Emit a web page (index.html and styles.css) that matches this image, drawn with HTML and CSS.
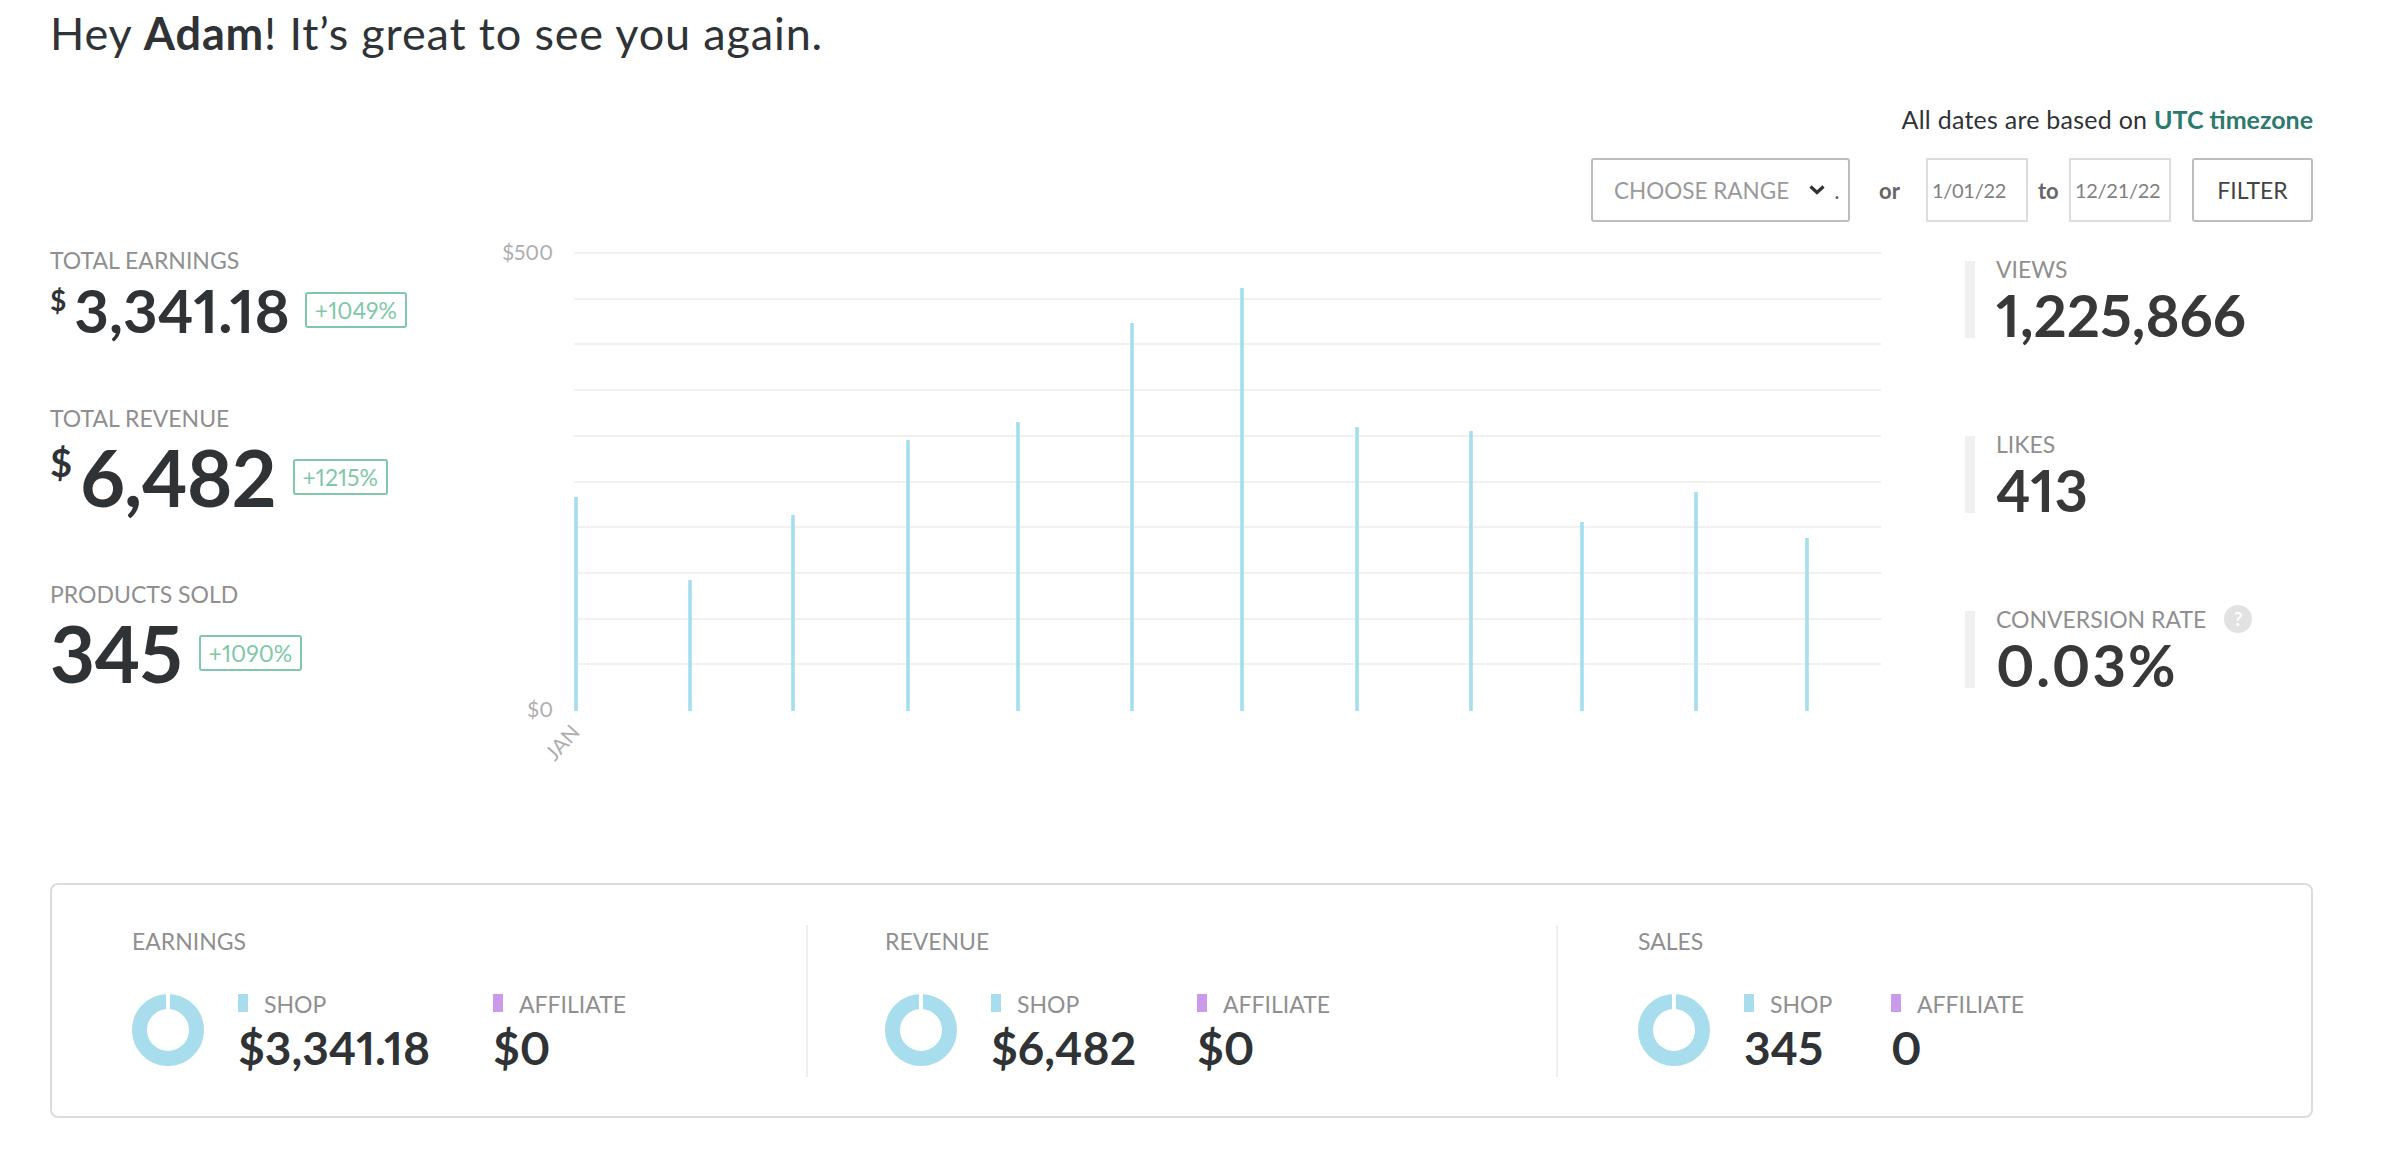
FILE: index.html
```html
<!DOCTYPE html>
<html lang="en">
<head>
<meta charset="UTF-8">
<meta name="viewport" content="width=device-width, initial-scale=1.0">
<title>Dashboard</title>
<link rel="stylesheet" href="styles.css">
</head>
<body>
<h1 class="greeting">Hey <strong>Adam</strong>! It’s great to see you again.</h1>

<p class="tz-note">All dates are based on <a href="#">UTC timezone</a></p>

<div class="filters">
  <div class="range-select">
    <span>CHOOSE RANGE</span>
    <svg class="chevron" width="16" height="10" viewBox="0 0 16 10"><path d="M1.5 1.5l6.5 6 6.5-6" fill="none" stroke="#2f3235" stroke-width="3.2"/></svg>
    <span class="range-dot">.</span>
  </div>
  <span class="filter-word filter-or">or</span>
  <input class="date-input" type="text" value="1/01/22">
  <span class="filter-word filter-to">to</span>
  <input class="date-input" type="text" value="12/21/22">
  <button class="filter-btn">FILTER</button>
</div>

<div class="overview">
  <div class="totals">
    <div class="total">
      <div class="total-label">TOTAL EARNINGS</div>
      <div class="total-row total-row-sm">
        <span class="currency">$</span><span class="total-value">3,341.18</span><span class="change">+1049%</span>
      </div>
    </div>
    <div class="total">
      <div class="total-label">TOTAL REVENUE</div>
      <div class="total-row">
        <span class="currency">$</span><span class="total-value">6,482</span><span class="change">+1215%</span>
      </div>
    </div>
    <div class="total">
      <div class="total-label">PRODUCTS SOLD</div>
      <div class="total-row">
        <span class="total-value">345</span><span class="change">+1090%</span>
      </div>
    </div>
  </div>

  <svg class="chart" width="1391" height="540" viewBox="490 240 1391 540">
    <g class="grid">
      <line x1="574" x2="1881" y1="253" y2="253"/>
      <line x1="574" x2="1881" y1="299" y2="299"/>
      <line x1="574" x2="1881" y1="344" y2="344"/>
      <line x1="574" x2="1881" y1="390" y2="390"/>
      <line x1="574" x2="1881" y1="436" y2="436"/>
      <line x1="574" x2="1881" y1="482" y2="482"/>
      <line x1="574" x2="1881" y1="527" y2="527"/>
      <line x1="574" x2="1881" y1="573" y2="573"/>
      <line x1="574" x2="1881" y1="619" y2="619"/>
      <line x1="574" x2="1881" y1="664" y2="664"/>
    </g>
    <g class="bars">
      <rect x="574.2" y="497" width="3.6" height="214"/>
      <rect x="688.2" y="580" width="3.6" height="131"/>
      <rect x="791.2" y="515" width="3.6" height="196"/>
      <rect x="906.2" y="440" width="3.6" height="271"/>
      <rect x="1016.2" y="422" width="3.6" height="289"/>
      <rect x="1130.2" y="323" width="3.6" height="388"/>
      <rect x="1240.2" y="288" width="3.6" height="423"/>
      <rect x="1355.2" y="427" width="3.6" height="284"/>
      <rect x="1469.2" y="431" width="3.6" height="280"/>
      <rect x="1580.2" y="522" width="3.6" height="189"/>
      <rect x="1694.2" y="492" width="3.6" height="219"/>
      <rect x="1805.2" y="538" width="3.6" height="173"/>
    </g>
    <text class="axis" x="553" y="260" text-anchor="end">$500</text>
    <text class="axis" x="553" y="717" text-anchor="end">$0</text>
    <text class="axis" x="0" y="0" text-anchor="end" transform="translate(581 733) rotate(-48)">JAN</text>
  </svg>

  <div class="engagement">
    <div class="metric">
      <div class="metric-label">VIEWS</div>
      <div class="metric-value">1,225,866</div>
    </div>
    <div class="metric">
      <div class="metric-label">LIKES</div>
      <div class="metric-value">413</div>
    </div>
    <div class="metric">
      <div class="metric-label">CONVERSION RATE <span class="help">?</span></div>
      <div class="metric-value metric-value-rate">0.03%</div>
    </div>
  </div>
</div>

<div class="breakdown">
  <section class="split split-earnings">
    <div class="split-title">EARNINGS</div>
    <div class="split-row">
      <svg class="donut" width="72" height="72" viewBox="0 0 72 72"><circle cx="36" cy="36" r="28.5"/><line x1="36" x2="36" y1="0" y2="16"/></svg>
      <div class="legend legend-wide">
        <div class="legend-head"><i class="swatch swatch-shop"></i>SHOP</div>
        <div class="legend-value">$3,341.18</div>
      </div>
      <div class="legend">
        <div class="legend-head"><i class="swatch swatch-affiliate"></i>AFFILIATE</div>
        <div class="legend-value">$0</div>
      </div>
    </div>
  </section>
  <section class="split split-revenue">
    <div class="split-title">REVENUE</div>
    <div class="split-row">
      <svg class="donut" width="72" height="72" viewBox="0 0 72 72"><circle cx="36" cy="36" r="28.5"/><line x1="36" x2="36" y1="0" y2="16"/></svg>
      <div class="legend legend-mid">
        <div class="legend-head"><i class="swatch swatch-shop"></i>SHOP</div>
        <div class="legend-value">$6,482</div>
      </div>
      <div class="legend">
        <div class="legend-head"><i class="swatch swatch-affiliate"></i>AFFILIATE</div>
        <div class="legend-value">$0</div>
      </div>
    </div>
  </section>
  <section class="split split-sales">
    <div class="split-title">SALES</div>
    <div class="split-row">
      <svg class="donut" width="72" height="72" viewBox="0 0 72 72"><circle cx="36" cy="36" r="28.5"/><line x1="36" x2="36" y1="0" y2="16"/></svg>
      <div class="legend legend-narrow">
        <div class="legend-head"><i class="swatch swatch-shop"></i>SHOP</div>
        <div class="legend-value">345</div>
      </div>
      <div class="legend">
        <div class="legend-head"><i class="swatch swatch-affiliate"></i>AFFILIATE</div>
        <div class="legend-value">0</div>
      </div>
    </div>
  </section>
</div>
</body>
</html>
```

FILE: styles.css
```css
body {
  margin: 0;
  padding: 10px 71px 0 50px;
  background-color: #ffffff;
  color: #303336;
  font-family: Lato, "Open Sans", sans-serif;
  font-variant-numeric: proportional-nums;
}

.greeting {
  margin: 0;
  font-size: 45px;
  line-height: 46px;
  font-weight: 400;
  letter-spacing: 0.85px;
}

.greeting strong {
  font-weight: 700;
}

.tz-note {
  margin: 48px 0 0;
  font-size: 25px;
  line-height: 30px;
  letter-spacing: 0.25px;
  text-align: right;
}

.tz-note a {
  color: #2b7a6c;
  font-weight: 700;
  letter-spacing: 0;
  text-decoration: none;
}

/* filter bar */
.filters {
  display: flex;
  justify-content: flex-end;
  align-items: center;
  margin-top: 24px;
  height: 64px;
}

.range-select {
  display: flex;
  align-items: center;
  box-sizing: border-box;
  width: 259px;
  height: 64px;
  padding-left: 21px;
  border: 2px solid #bdbdbd;
  border-radius: 3px;
  color: #9a9a9a;
  font-size: 22.5px;
}

.chevron {
  margin-left: 20px;
}

.range-dot {
  margin-left: 9px;
  color: #666666;
}

.filter-word {
  color: #666666;
  font-size: 22px;
  font-weight: 700;
}

.filter-or {
  width: 20px;
  margin: 0 27px 0 29px;
}

.filter-to {
  width: 20px;
  margin: 0 11px 0 10px;
}

.date-input {
  box-sizing: border-box;
  width: 102px;
  height: 64px;
  padding: 0 4px;
  border: 2px solid #dddddd;
  border-radius: 0;
  color: #808080;
  font-family: inherit;
  font-size: 20px;
  letter-spacing: -0.3px;
}

.filter-btn {
  box-sizing: border-box;
  width: 121px;
  height: 64px;
  margin-left: 21px;
  border: 2px solid #bdbdbd;
  border-radius: 3px;
  background-color: #ffffff;
  color: #444444;
  font-family: inherit;
  font-size: 23px;
}

/* top area with totals, chart, engagement */
.overview {
  display: flex;
  margin-top: 18px;
  margin-bottom: 103px;
}

.totals {
  width: 440px;
  padding-top: 8px;
}

.total {
  margin-bottom: 65px;
}

.total:first-child {
  margin-bottom: 66px;
}

.total:last-child {
  margin-bottom: 0;
}

.total-label {
  color: #8f8f8f;
  font-size: 23px;
  line-height: 24px;
}

.total-row {
  display: flex;
  align-items: flex-start;
  margin-top: 7px;
  height: 80px;
}

.total-row .total-value {
  font-size: 78px;
  line-height: 80px;
  font-weight: 700;
  letter-spacing: -1px;
}

.total-row .currency {
  font-size: 38px;
  line-height: 50px;
  font-weight: 700;
  margin-right: 8px;
}

.total-row .change {
  margin: 22px 0 0 17px;
}

.total-row-sm {
  margin-top: 8px;
  height: 60px;
}

.total-row-sm .total-value {
  font-size: 60px;
  line-height: 60px;
  letter-spacing: 0;
}

.total-row-sm .currency {
  font-size: 28px;
  line-height: 40px;
}

.total-row-sm .change {
  margin: 12px 0 0 15px;
}

.change {
  padding: 0 8px;
  height: 32px;
  line-height: 32px;
  border: 2px solid #7fc8a9;
  border-radius: 3px;
  color: #7fc8a9;
  font-size: 23px;
}

.chart {
  flex: none;
}

.grid line {
  stroke: #f1f1f1;
  stroke-width: 2;
}

.bars rect {
  fill: #a5deed;
}

.axis {
  fill: #aeaeae;
  font-size: 21px;
}

.engagement {
  margin-left: 84px;
  padding-top: 21px;
}

.metric {
  box-sizing: border-box;
  height: 77px;
  margin-bottom: 98px;
  padding-left: 21px;
  border-left: 10px solid #eff1f1;
}

.metric:last-child {
  margin-bottom: 0;
}

.metric-label {
  display: flex;
  align-items: center;
  height: 16px;
  color: #8f8f8f;
  font-size: 23px;
  white-space: pre;
}

.metric-value {
  margin-top: 13px;
  color: #383838;
  font-size: 58px;
  line-height: 50px;
  font-weight: 700;
}

.metric-value-rate {
  letter-spacing: 2px;
}

.help {
  display: flex;
  justify-content: center;
  align-items: center;
  flex: none;
  width: 28px;
  height: 28px;
  margin-left: 12px;
  border-radius: 50%;
  background-color: #e2e2e2;
  color: #ffffff;
  font-size: 18px;
  font-weight: 700;
}

/* bottom breakdown box */
.breakdown {
  display: grid;
  grid-template-columns: 754px 750px 1fr;
  box-sizing: border-box;
  height: 235px;
  padding-top: 40px;
  border: 2px solid #dcdcdc;
  border-radius: 8px;
}

.split {
  box-sizing: border-box;
  height: 152px;
  padding-top: 4px;
}

.split-earnings {
  padding-left: 80px;
}

.split-revenue,
.split-sales {
  padding-left: 77px;
  border-left: 2px solid #efefef;
}

.split-sales {
  padding-left: 80px;
}

.split-title {
  color: #8f8f8f;
  font-size: 23px;
  line-height: 24px;
}

.split-row {
  display: flex;
  margin-top: 41px;
}

.donut {
  flex: none;
  margin-right: 34px;
}

.donut circle {
  fill: none;
  stroke: #a8dded;
  stroke-width: 15;
}

.donut line {
  stroke: #ffffff;
  stroke-width: 4;
}

.legend-wide {
  width: 255px;
}

.legend-mid {
  width: 206px;
}

.legend-narrow {
  width: 147px;
}

.legend-head {
  display: flex;
  height: 18px;
  color: #8f8f8f;
  font-size: 23px;
  line-height: 20px;
}

.swatch {
  width: 10px;
  height: 18px;
  margin-right: 16px;
}

.swatch-shop {
  background-color: #a8dded;
}

.swatch-affiliate {
  background-color: #c99bea;
}

.legend-value {
  margin: 14px 0 0 0;
  font-size: 46px;
  line-height: 44px;
  font-weight: 700;
}
```
